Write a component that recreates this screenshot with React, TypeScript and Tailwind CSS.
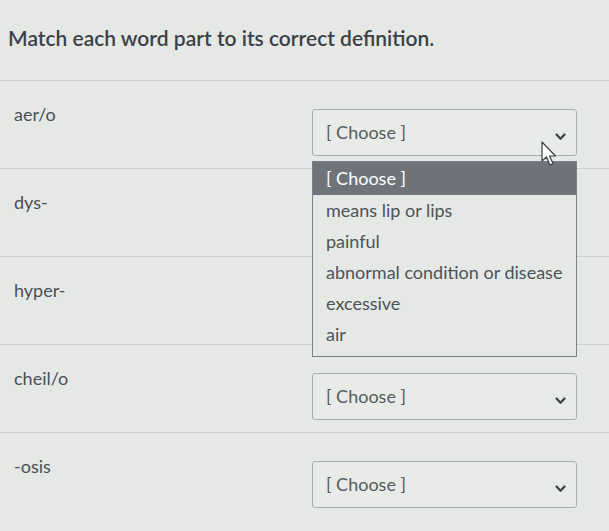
import React from "react";

const Chevron = () => (
  <svg width="11" height="8" viewBox="0 0 11 8" className="text-[#3d4348]">
    <path d="M1.5 1.5 L5.5 5.8 L9.5 1.5" fill="none" stroke="currentColor" strokeWidth="2.2" strokeLinecap="round" strokeLinejoin="round" />
  </svg>
);

const Select = ({ open }: { open?: boolean }) => (
  <div className="relative w-[265px]">
    <div className="h-[47px] border border-[#a9aeb2] rounded-[3px] bg-[#e9ebe8] flex items-center justify-between pl-[13px] pr-[10px]">
      <span className="text-[18px] text-[#555b60]">[ Choose ]</span>
      <div className="mt-[8px]"><Chevron /></div>
    </div>
    {open && (
      <div className="absolute left-0 top-[52px] w-[265px] border border-[#7d8287] bg-[#e6e8e5] z-10 pb-[6px]">
        <div className="bg-[#6e7479] text-white text-[18px] h-[33px] flex items-center pl-[13px]">[ Choose ]</div>
        {["means lip or lips", "painful", "abnormal condition or disease", "excessive", "air"].map((t) => (
          <div key={t} className="h-[31px] flex items-center pl-[13px] text-[18px] text-[#4d5358]">{t}</div>
        ))}
      </div>
    )}
    {open && (
      <svg className="absolute left-[228px] top-[32px] z-20" width="20" height="26" viewBox="0 0 20 26">
        <path d="M2 1 L2 20 L6.5 16 L10 24 L13 22.5 L9.5 15 L15.5 15 Z" fill="#ffffff" stroke="#3a3f44" strokeWidth="1.2" strokeLinejoin="round" />
      </svg>
    )}
  </div>
);

const Row = ({ label, open, sel }: { label: string; open?: boolean; sel?: boolean }) => (
  <div className="border-t border-[#cfd2cf] h-[88px] flex justify-between pr-[32px]">
    <div className="pl-[14px] pt-[20px] text-[18px] text-[#4a5056]">{label}</div>
    {sel !== false && (
      <div className="pt-[28px]">
        <Select open={open} />
      </div>
    )}
  </div>
);

export default function App() {
  return (
    <div className="w-[609px] h-[531px] bg-[#e6e8e5] overflow-hidden" style={{ fontFamily: "Lato, 'Noto Sans', sans-serif" }}>
      <div className="pl-[8px] pt-[22px] h-[80px] text-[21px] font-semibold text-[#3b4146]">Match each word part to its correct deﬁnition.</div>
      <Row label="aer/o" open />
      <Row label="dys-" sel={false} />
      <Row label="hyper-" sel={false} />
      <Row label="cheil/o" />
      <Row label="-osis" />
    </div>
  );
}
